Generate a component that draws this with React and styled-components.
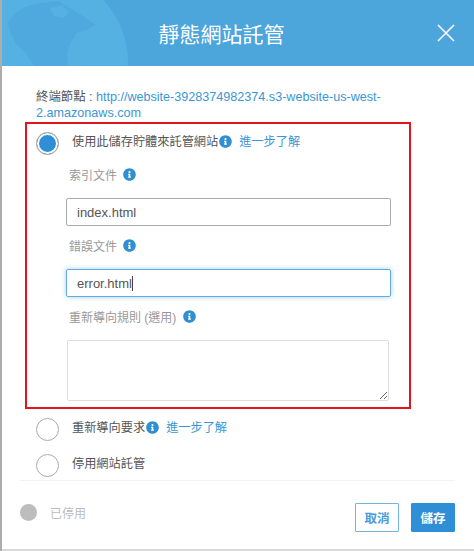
import React from 'react'
import styled, { createGlobalStyle } from 'styled-components'
import { FaInfoCircle } from 'react-icons/fa'

const GlobalStyle = createGlobalStyle`
  html, body {
    margin: 0;
    padding: 0;
    background: #d9d9d9;
  }
  body {
    font-family: "Liberation Sans", "Noto Sans CJK TC", sans-serif;
  }
`

function Globe() {
  return (
    <GlobeArt viewBox='0 0 140 66' width='140' height='66' aria-hidden='true'>
      <circle cx='38' cy='62' r='90' fill='#55b1e2' />
      <path
        d='M8 22 C14 12 26 5 40 3 L58 1 L70 8 L78 13 L85 17 L95 25 L87 30 L77 33 L71 42 L67 52 L68 66 L34 66 L25 52 L16 44 L10 32 Z'
        fill='#4fa9de'
      />
      <path d='M50 8 L62 5 L68 12 L64 18 L54 16 Z' fill='#55b1e2' />
    </GlobeArt>
  )
}

export default function App() {
  return (
    <Page>
      <GlobalStyle />
      <Dialog>
        <Header>
          <Globe />
          <Title>靜態網站託管</Title>
          <CloseButton aria-label='關閉'>
            <svg viewBox='0 0 18 18' width='18' height='18'>
              <path d='M1 1 L17 17 M17 1 L1 17' stroke='#fff' strokeWidth='1.6' fill='none' />
            </svg>
          </CloseButton>
        </Header>

        <Endpoint>
          <CjkLabel>終端節點 : </CjkLabel>
          <LinkText>
            http://website-3928374982374.s3-website-us-west-
            <br />
            2.amazonaws.com
          </LinkText>
        </Endpoint>

        <Highlight>
          <RadioRow>
            <Radio $checked />
            <RadioLabel>使用此儲存貯體來託管網站</RadioLabel>
            <RowInfo />
            <MoreLink>進一步了解</MoreLink>
          </RadioRow>

          <Form>
            <FieldLabel>
              索引文件 <InfoIcon />
            </FieldLabel>
            <Field>index.html</Field>
            <FieldLabel>
              錯誤文件 <InfoIcon />
            </FieldLabel>
            <Field $focused>
              error.html
              <Caret />
            </Field>
            <FieldLabel>
              重新導向規則 (選用) <InfoIcon />
            </FieldLabel>
            <Rules readOnly />
          </Form>
        </Highlight>

        <Options>
          <RadioRow>
            <Radio />
            <RadioLabel>重新導向要求</RadioLabel>
            <RowInfo />
            <MoreLink>進一步了解</MoreLink>
          </RadioRow>
          <RadioRow>
            <Radio />
            <RadioLabel>停用網站託管</RadioLabel>
          </RadioRow>
        </Options>

        <Footer>
          <Status>
            <StatusDot />
            已停用
          </Status>
          <Actions>
            <Button>取消</Button>
            <Button $primary>儲存</Button>
          </Actions>
        </Footer>
      </Dialog>
    </Page>
  )
}

const Page = styled.div`
  width: 474px;
  height: 551px;
  overflow: hidden;
  background: #d9d9d9;
  border-left: 2px solid #adadad;
  box-sizing: border-box;
`
const Dialog = styled.div`
  height: 549px;
  background: #fff;
  display: flex;
  flex-direction: column;
`
const Header = styled.header`
  position: relative;
  flex: none;
  height: 66px;
  background: #4ca5db;
  display: flex;
  align-items: center;
  overflow: hidden;
`
const GlobeArt = styled.svg`
  position: absolute;
  left: -2px;
  top: 0;
`
const Title = styled.h1`
  position: relative;
  flex: 1;
  margin: 0;
  color: #fff;
  font-size: 21px;
  font-weight: 400;
  text-align: center;
`
const CloseButton = styled.button`
  flex: none;
  width: 33px;
  height: 66px;
  padding: 0;
  border: 0;
  background: none;
  display: flex;
  align-items: center;
  justify-content: flex-start;
  margin-left: -4px;
  margin-right: 4px;
`
const Endpoint = styled.div`
  margin: 23px 0 0 34px;
  font-size: 12.6px;
  line-height: 16px;
  height: 33px;
  color: #555;
`
const CjkLabel = styled.span`
  font-size: 12.4px;
`
const LinkText = styled.span`
  color: #3a96d4;
`
const Highlight = styled.section`
  box-sizing: border-box;
  width: 386px;
  height: 287px;
  margin-left: 23px;
  border: 2px solid #e2141c;
  padding: 6px 0 0 9px;
`
const RadioRow = styled.div`
  display: flex;
  align-items: center;
  height: 26px;
  font-size: 12px;
`
const Radio = styled.span`
  box-sizing: border-box;
  flex: none;
  width: 23px;
  height: 23px;
  border-radius: 50%;
  border: 1px solid #a9a9a9;
  margin-right: 13px;
  background: ${({ $checked }) => ($checked ? '#2f8fd6' : '#fff')};
  box-shadow: ${({ $checked }) => ($checked ? 'inset 0 0 0 2px #fff' : 'none')};
`
const RadioLabel = styled.span`
  color: #555;
  font-size: 12.2px;
  margin-bottom: 4px;
`
const InfoIcon = styled(FaInfoCircle)`
  flex: none;
  width: 13px;
  height: 13px;
  color: #2f8fd0;
  margin-left: 3px;
`
const RowInfo = styled(InfoIcon)`
  margin-left: 1px;
  margin-bottom: 4px;
`
const MoreLink = styled.span`
  margin-left: 7px;
  margin-bottom: 4px;
  color: #3a96d4;
  font-size: 12.2px;
`
const Form = styled.div`
  margin: -1px 0 0 30px;
  width: 325px;
`
const FieldLabel = styled.div`
  box-sizing: border-box;
  height: 43px;
  padding: 0 0 4px 3px;
  display: flex;
  align-items: center;
  white-space: pre;
  color: #999;
  font-size: 12px;
`
const Field = styled.div`
  box-sizing: border-box;
  height: 28px;
  padding-left: 10px;
  display: flex;
  align-items: center;
  font-size: 13px;
  color: #555;
  background: #fff;
  border-radius: 2px;
  border: 1px solid ${({ $focused }) => ($focused ? '#62abe0' : '#aaa')};
  box-shadow: ${({ $focused }) => ($focused ? '0 0 5px rgba(80, 165, 225, 0.55)' : 'none')};
`
const Caret = styled.span`
  width: 1px;
  height: 15px;
  background: #444;
`
const Rules = styled.textarea`
  display: block;
  box-sizing: border-box;
  width: 322px;
  height: 61px;
  margin-left: 1px;
  border: 1px solid #ddd;
  border-radius: 2px;
  outline: none;
`
const Options = styled.div`
  margin: 7px 0 0 34px;
  display: flex;
  flex-direction: column;
  gap: 10px;
`
const Footer = styled.footer`
  flex: 1;
  margin: 2px 19px 0 18px;
  border-top: 1px solid #f2f2f2;
  display: flex;
  justify-content: space-between;
  align-items: flex-start;
  padding-top: 22px;
`
const Status = styled.div`
  display: flex;
  align-items: center;
  gap: 13px;
  color: #bbb;
  font-size: 12px;
  height: 18px;
`
const StatusDot = styled.span`
  width: 17px;
  height: 17px;
  border-radius: 50%;
  background: #bdbdbd;
`
const Actions = styled.div`
  display: flex;
  gap: 12px;
`
const Button = styled.button`
  box-sizing: border-box;
  width: 44px;
  height: 29px;
  padding: 0;
  border-radius: 1px;
  font-family: inherit;
  font-size: 12.5px;
  font-weight: 700;
  border: 1px solid ${({ $primary }) => ($primary ? '#2f8fd6' : '#74b3dd')};
  background: ${({ $primary }) => ($primary ? '#2f8fd6' : '#fff')};
  color: ${({ $primary }) => ($primary ? '#fff' : '#4a9bd6')};
`
